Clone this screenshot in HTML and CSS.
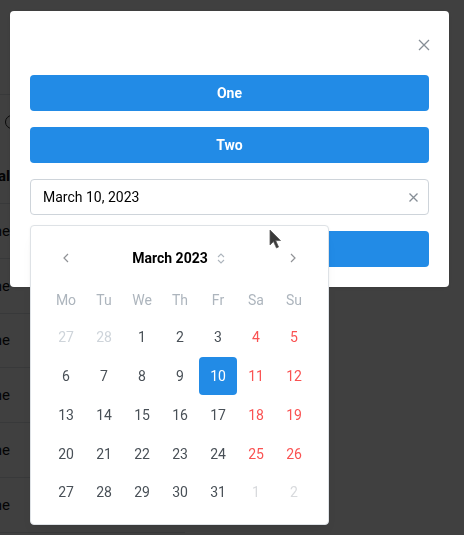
FILE: index.html
```
<!DOCTYPE html>
<html>
<head>
<meta charset="utf-8">
<link rel="stylesheet" href="styles.css">
</head>
<body>
<div class="page">
  <div class="table">
    <div class="toolbar">
      <div class="tool-row"><span class="search-ring"></span></div>
      <div class="head-row"><span class="cell head">Total</span></div>
    </div>
    <div class="row"><span class="cell">One</span></div>
    <div class="row"><span class="cell">One</span></div>
    <div class="row"><span class="cell">One</span></div>
    <div class="row"><span class="cell">One</span></div>
    <div class="row"><span class="cell">One</span></div>
    <div class="row"><span class="cell">One</span></div>
  </div>
</div>

<div class="overlay"></div>

<div class="modal">
  <div class="modal-header">
    <button class="close-btn" aria-label="Close">
      <svg width="12" height="12" viewBox="0 0 12 12"><path d="M1 1L11 11M11 1L1 11" stroke="#868e96" stroke-width="1.3" fill="none"/></svg>
    </button>
  </div>
  <div class="modal-body">
    <button class="btn">One</button>
    <button class="btn">Two</button>
    <div class="field">
      <div class="input">
        <span class="value">March 10, 2023</span>
        <svg class="clear" width="9" height="9" viewBox="0 0 9 9"><path d="M0.5 0.5L8.5 8.5M8.5 0.5L0.5 8.5" stroke="#868e96" stroke-width="1.3" fill="none"/></svg>
      </div>
      <div class="popover">
        <div class="cal-header">
          <span class="ctl">
            <svg width="6" height="10" viewBox="0 0 6 10"><path d="M5 1L1 5L5 9" stroke="#909296" stroke-width="1.2" fill="none"/></svg>
          </span>
          <span class="level">March 2023
            <svg class="selector" width="8" height="11" viewBox="0 0 8 11"><path d="M1 4L4 1L7 4M1 7L4 10L7 7" stroke="#adb5bd" stroke-width="1.1" fill="none"/></svg>
          </span>
          <span class="ctl">
            <svg width="6" height="10" viewBox="0 0 6 10"><path d="M1 1L5 5L1 9" stroke="#909296" stroke-width="1.2" fill="none"/></svg>
          </span>
        </div>
        <div class="weekdays">
          <span>Mo</span><span>Tu</span><span>We</span><span>Th</span><span>Fr</span><span>Sa</span><span>Su</span>
        </div>
        <div class="days">
          <span class="day out">27</span><span class="day out">28</span><span class="day">1</span><span class="day">2</span><span class="day">3</span><span class="day we">4</span><span class="day we">5</span>
          <span class="day">6</span><span class="day">7</span><span class="day">8</span><span class="day">9</span><span class="day sel">10</span><span class="day we">11</span><span class="day we">12</span>
          <span class="day">13</span><span class="day">14</span><span class="day">15</span><span class="day">16</span><span class="day">17</span><span class="day we">18</span><span class="day we">19</span>
          <span class="day">20</span><span class="day">21</span><span class="day">22</span><span class="day">23</span><span class="day">24</span><span class="day we">25</span><span class="day we">26</span>
          <span class="day">27</span><span class="day">28</span><span class="day">29</span><span class="day">30</span><span class="day">31</span><span class="day out2">1</span><span class="day out2">2</span>
        </div>
      </div>
    </div>
    <button class="btn">Three</button>
  </div>
</div>

<svg class="cursor" width="14" height="20" viewBox="0 0 14 20"><path d="M1 1L1 16L4.5 12.5L7.5 19L9.5 18L6.7 11.6L11.5 11.5Z" fill="#3a3a3a" stroke="#5a5a5a" stroke-width="0.8"/></svg>
</body>
</html>
```
FILE: styles.css
```
* { box-sizing: border-box; }
html, body {
  margin: 0;
  padding: 0;
  width: 464px;
  height: 535px;
  overflow: hidden;
  font-family: Roboto, "Liberation Sans", sans-serif;
  background: #fff;
}

.page {
  padding-top: 94px;
}
.table {
  width: 225px;
  margin-left: -40px;
  border-top: 1px solid #dee2e6;
}
.toolbar {
  height: 109px;
  display: flex;
  flex-direction: column;
  border-bottom: 1px solid #dee2e6;
}
.tool-row {
  height: 54px;
  display: flex;
  align-items: center;
  padding-left: 45px;
}
.search-ring {
  width: 14px;
  height: 14px;
  border: 1.5px solid #222;
  border-radius: 50%;
}
.head-row, .row {
  height: 54.8px;
  display: flex;
  align-items: center;
}
.row { border-bottom: 1px solid #dee2e6; }
.cell {
  width: 50px;
  text-align: right;
  font-size: 15px;
  color: #111;
}
.cell.head { font-weight: 700; }

.overlay {
  position: fixed;
  inset: 0;
  background: rgba(0, 0, 0, 0.75);
}

.modal {
  position: absolute;
  left: 10px;
  top: 11px;
  width: 439px;
  background: #fff;
  border-radius: 4px;
  padding: 20px;
  box-shadow: 0 1px 3px rgba(0,0,0,0.1);
}
.modal-header {
  display: flex;
  justify-content: flex-end;
  height: 28px;
  margin-bottom: 16px;
}
.close-btn {
  width: 28px;
  height: 28px;
  border: 0;
  background: none;
  padding: 0;
  display: flex;
  align-items: center;
  justify-content: center;
  margin-right: -9px;
}
.modal-body {
  display: flex;
  flex-direction: column;
  gap: 16px;
}
.btn {
  height: 36px;
  border: 0;
  border-radius: 4px;
  background: #228be6;
  color: #fff;
  font-family: Roboto, "Liberation Sans", sans-serif;
  font-size: 14px;
  font-weight: 700;
  padding: 0;
}

.field { position: relative; z-index: 2; }
.input {
  height: 36px;
  border: 1px solid #ced4da;
  border-radius: 4px;
  display: flex;
  align-items: center;
  justify-content: space-between;
  padding: 0 10px 0 12px;
  font-size: 14px;
  color: #000;
}

.popover {
  position: absolute;
  top: calc(100% + 10px);
  left: 0;
  width: 299px;
  background: #fff;
  border: 1px solid #dee2e6;
  border-radius: 4px;
  padding: 16px 16px 12px;
  box-shadow: 0 1px 3px rgba(0,0,0,0.05), 0 10px 15px -5px rgba(0,0,0,0.05), 0 7px 7px -5px rgba(0,0,0,0.04);
}
.cal-header {
  height: 32px;
  display: flex;
  align-items: center;
  margin-bottom: 16px;
}
.ctl {
  width: 38px;
  height: 32px;
  display: flex;
  align-items: center;
  justify-content: center;
}
.level {
  flex: 1;
  display: flex;
  align-items: center;
  justify-content: center;
  gap: 9px;
  font-size: 14px;
  font-weight: 700;
  color: #000;
  padding-right: 2px;
}
.weekdays {
  display: grid;
  grid-template-columns: repeat(7, 38px);
  height: 28px;
  padding-bottom: 8px;
  line-height: 20px;
  font-size: 14px;
  color: #adb5bd;
  text-align: center;
}
.days {
  display: grid;
  grid-template-columns: repeat(7, 38px);
  grid-auto-rows: 38.75px;
}
.day {
  display: flex;
  align-items: center;
  justify-content: center;
  font-size: 14px;
  color: #495057;
  border-radius: 4px;
}
.day.we { color: #fa5252; }
.day.out { color: #ced4da; }
.day.out2 { color: #d8dadd; }
.day.sel {
  background: #228be6;
  color: #fff;
  height: 38px;
}

.cursor {
  position: absolute;
  left: 269px;
  top: 229px;
  z-index: 5;
}
```
